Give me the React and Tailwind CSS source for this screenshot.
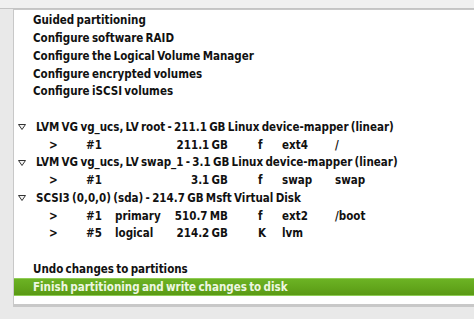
import React from 'react';

const FONT = { fontFamily: '"DejaVu Sans Condensed", "DejaVu Sans", "Liberation Sans", sans-serif' };

const MENU = [
  'Guided partitioning',
  'Configure software RAID',
  'Configure the Logical Volume Manager',
  'Configure encrypted volumes',
  'Configure iSCSI volumes',
];

// disques et partitions
const DISKS = [
  {
    title: 'LVM VG vg_ucs, LV root - 211.1 GB Linux device-mapper (linear)',
    parts: [{ num: '#1', type: '', size: '211.1 GB', flag: 'f', fs: 'ext4', mount: '/' }],
  },
  {
    title: 'LVM VG vg_ucs, LV swap_1 - 3.1 GB Linux device-mapper (linear)',
    parts: [{ num: '#1', type: '', size: '3.1 GB', flag: 'f', fs: 'swap', mount: 'swap' }],
  },
  {
    title: 'SCSI3 (0,0,0) (sda) - 214.7 GB Msft Virtual Disk',
    parts: [
      { num: '#1', type: 'primary', size: '510.7 MB', flag: 'f', fs: 'ext2', mount: '/boot' },
      { num: '#5', type: 'logical', size: '214.2 GB', flag: 'K', fs: 'lvm', mount: '' },
    ],
  },
];

const Row = ({ children, className = '' }) => (
  <div className={`flex items-center h-[17.75px] whitespace-nowrap ${className}`}>{children}</div>
);

const Arrow = () => (
  <svg width="8" height="6" viewBox="0 0 8 6" className="mr-[10px] ml-[2px]">
    <path d="M0.5 0.5 H7.5 L4 5.5 Z" fill="#f4f4f4" stroke="#333" strokeWidth="1" />
  </svg>
);

export default function App() {
  return (
    <div className="w-[474px] h-[319px] bg-[#e9e9e9] overflow-hidden relative text-[#111]" style={FONT}>
      <div className="h-[9px] bg-[#f0f0f0] border-b border-[#c4c4c4]" />
      <div className="ml-[13px] w-[480px] h-[298px] bg-white border-l border-t border-b-[3px] border-[#c8c8c8] pt-[2px] font-bold text-[11.5px] [word-spacing:-1.3px]">
        {MENU.map((m) => (
          <Row key={m} className="pl-[19px]">{m}</Row>
        ))}
        <Row />
        {DISKS.map((d) => (
          <React.Fragment key={d.title}>
            <Row className="pl-[2px]">
              <Arrow />
              {d.title}
            </Row>
            {d.parts.map((p, i) => (
              <Row key={i}>
                <span className="w-[72px] pl-[35px]">&gt;</span>
                <span className="w-[29px]">{p.num}</span>
                <span className="w-[55px]">{p.type}</span>
                <span className="w-[58px] text-right">{p.size}</span>
                <span className="w-[30px] ml-[30px]">{p.flag}</span>
                <span className="w-[53px] ml-[-6px]">{p.fs}</span>
                <span>{p.mount}</span>
              </Row>
            ))}
          </React.Fragment>
        ))}
        <Row />
        <Row className="pl-[19px]">Undo changes to partitions</Row>
        <Row className="pl-[19px] bg-gradient-to-b from-[#6cb324] to-[#5a9a14] text-[#eef7e2] border-y border-[#8fcc55]">
          Finish partitioning and write changes to disk
        </Row>
      </div>
    </div>
  );
}
